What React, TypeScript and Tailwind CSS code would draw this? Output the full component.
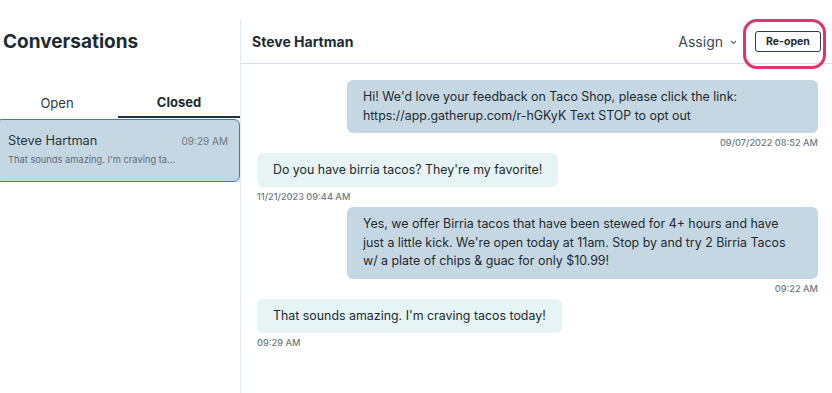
import React from "react";

const font = { fontFamily: "Inter, 'Noto Sans', sans-serif" };

function Outgoing({ text, time }: { text: string; time: string }) {
  return (
    <div className="flex flex-col items-end">
      <div className="w-[471px] rounded-md bg-[#c6d7e4] px-4 py-2 text-[12.4px] leading-[18.5px] text-[#1e2a2e]">
        {text}
      </div>
      <div className="mt-[4px] text-[9.2px] leading-[12px] font-medium text-[#6e7a85]">{time}</div>
    </div>
  );
}

function Incoming({ text, time }: { text: string; time: string }) {
  return (
    <div className="flex flex-col items-start">
      <div className="rounded-md bg-[#e7f4f6] px-4 py-2 text-[12.4px] leading-[18px] text-[#1e2a2e]">
        {text}
      </div>
      <div className="mt-[4px] text-[9.2px] leading-[12px] font-medium text-[#6e7a85]">{time}</div>
    </div>
  );
}

export default function App() {
  return (
    <div className="relative h-[393px] w-[832px] overflow-hidden bg-white" style={font}>
      <div className="flex h-full">
        {/* Left panel */}
        <div className="-ml-[4px] flex w-[244px] shrink-0 flex-col">
          <div className="flex h-[64px] items-center pl-[7px] pt-[20px]">
            <h1 className="text-[19px] font-bold text-[#1c2b30]">Conversations</h1>
          </div>
          <div className="mt-[28px] flex h-[26px]">
            <div className="flex flex-1 items-start justify-center text-[13px] leading-[22px] text-[#2b3a3f]">Open</div>
            <div className="flex flex-1 items-start justify-center border-b-2 border-[#1f3440] text-[13px] leading-[20px] font-bold text-[#1c2b30]">
              Closed
            </div>
          </div>
          <div className="mt-[1px] h-[63px] rounded-md border border-[#3f7db0] bg-[#c6d7e4] px-[11px] pt-[12px]">
            <div className="flex items-center justify-between">
              <span className="text-[12.8px] leading-[18px] text-[#26363b]">Steve Hartman</span>
              <span className="text-[10px] text-[#6a7782]">09:29 AM</span>
            </div>
            <div className="mt-[3px] text-[9.3px] leading-[14px] text-[#5f6c76]">That sounds amazing. I'm craving ta...</div>
          </div>
        </div>

        {/* Right panel */}
        <div className="mt-[20px] flex flex-1 flex-col border-l border-[#dfe9f1]">
          <div className="flex h-[44px] shrink-0 items-center border-b border-[#d3e2ee] pl-[11px] pr-[11px]">
            <span className="text-[14px] font-bold text-[#1c2b30]">Steve Hartman</span>
            <div className="ml-auto flex items-center">
              <span className="text-[14px] text-[#3b4a50]">Assign</span>
              <svg className="ml-[7px] mt-[2px]" width="7" height="5" viewBox="0 0 7 5">
                <path d="M1 1l2.5 2.5L6 1" fill="none" stroke="#5b6a70" strokeWidth="1.2" />
              </svg>
              <button className="ml-[18px] h-[21px] w-[66px] rounded-[3px] border-[1.5px] border-[#2f3d42] text-[10.5px] font-bold text-[#1c2b30]">
                Re-open
              </button>
            </div>
          </div>
          <div className="flex flex-col gap-[4px] pl-[16px] pr-[14px] pt-[16px]">
            <Outgoing
              text="Hi! We'd love your feedback on Taco Shop, please click the link: https://app.gatherup.com/r-hGKyK Text STOP to opt out"
              time="09/07/2022 08:52 AM"
            />
            <Incoming text="Do you have birria tacos? They're my favorite!" time="11/21/2023 09:44 AM" />
            <Outgoing
              text="Yes, we offer Birria tacos that have been stewed for 4+ hours and have just a little kick. We're open today at 11am. Stop by and try 2 Birria Tacos w/ a plate of chips & guac for only $10.99!"
              time="09:22 AM"
            />
            <Incoming text="That sounds amazing. I'm craving tacos today!" time="09:29 AM" />
          </div>
        </div>
      </div>

      {/* Annotation highlight */}
      <div className="pointer-events-none absolute left-[743px] top-[19px] h-[50px] w-[83px] rounded-[14px] border-[3px] border-[#e2336d]" />
    </div>
  );
}
